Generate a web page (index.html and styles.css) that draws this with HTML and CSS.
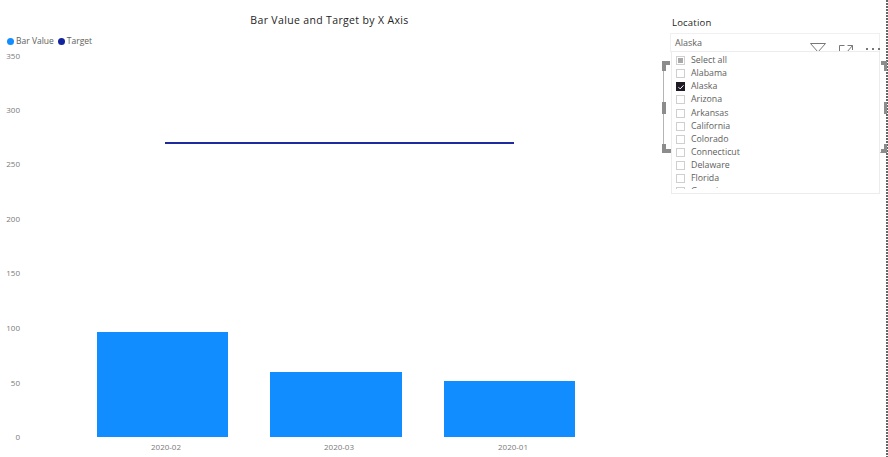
FILE: index.html
```html
<!DOCTYPE html>
<html lang="en">
<head>
    <meta charset="UTF-8">
    <meta name="viewport" content="width=device-width, initial-scale=1.0">
    <title>Bar Value and Target by X Axis</title>
    <link rel="stylesheet" href="styles.css">
</head>
<body>
    <div class="report">
        <section class="chart">
            <h1 class="chart-title">Bar Value and Target by X Axis</h1>
            <div class="legend">
                <span class="legend-item"><i class="dot dot-bar"></i>Bar Value</span>
                <span class="legend-item"><i class="dot dot-target"></i>Target</span>
            </div>
            <svg class="plot" width="660" height="407" viewBox="0 0 660 407">
                <g class="axis-y">
                    <text x="20" y="12">350</text>
                    <text x="20" y="66">300</text>
                    <text x="20" y="120">250</text>
                    <text x="20" y="175">200</text>
                    <text x="20" y="229">150</text>
                    <text x="20" y="284">100</text>
                    <text x="20" y="339">50</text>
                    <text x="20" y="393">0</text>
                </g>
                <rect class="bar" x="97" y="285" width="131" height="105"/>
                <rect class="bar" x="270" y="325" width="132" height="65"/>
                <rect class="bar" x="444" y="334" width="131" height="56"/>
                <line class="target" x1="165" y1="96" x2="514" y2="96"/>
                <g class="axis-x">
                    <text x="166" y="403">2020-02</text>
                    <text x="339" y="403">2020-03</text>
                    <text x="513" y="403">2020-01</text>
                </g>
            </svg>
        </section>

        <section class="slicer">
            <div class="slicer-title">Location</div>
            <div class="slicer-head">
                <span>Alaska</span>
                <div class="visual-icons">
                    <svg width="16" height="9" viewBox="0 0 16 9"><path d="M.5.5h15L8 9z"/></svg>
                    <svg width="14" height="7" viewBox="0 0 14 7"><path d="M.5 7V.5h5M8.5.5h5V5M13.5.5L8 7"/></svg>
                    <div class="more"><i></i><i></i><i></i></div>
                </div>
            </div>
            <div class="frame">
                <b class="handle h-tl"></b><b class="handle h-ml"></b><b class="handle h-bl"></b>
                <b class="handle h-tr"></b><b class="handle h-mr"></b><b class="handle h-br"></b>
            </div>
            <div class="dropdown">
                <ul class="dropdown-list">
                    <li><i class="box box-partial"></i>Select all</li>
                    <li><i class="box"></i>Alabama</li>
                    <li><i class="box box-on"><svg width="8" height="8" viewBox="0 0 8 8"><path d="M1.5 4.2l1.7 1.7 3.3-3.6"/></svg></i>Alaska</li>
                    <li><i class="box"></i>Arizona</li>
                    <li><i class="box"></i>Arkansas</li>
                    <li><i class="box"></i>California</li>
                    <li><i class="box"></i>Colorado</li>
                    <li><i class="box"></i>Connecticut</li>
                    <li><i class="box"></i>Delaware</li>
                    <li><i class="box"></i>Florida</li>
                    <li><i class="box"></i>Georgia</li>
                </ul>
            </div>
        </section>

        <div class="page-edge"></div>
    </div>
</body>
</html>
```

FILE: styles.css
```css
* {
    margin: 0;
    padding: 0;
    box-sizing: border-box;
}

html, body {
    height: 100%;
    overflow: hidden;
}

body {
    background: #fff;
    font-family: 'Open Sans', 'Noto Sans', sans-serif;
    color: #444;
}

.report {
    display: flex;
    height: 457px;
}

.chart {
    width: 660px;
    flex: none;
}

.chart-title {
    margin-top: 13px;
    margin-left: -1px;
    font-size: 10.5px;
    line-height: 14px;
    font-weight: 400;
    text-align: center;
    letter-spacing: 0.35px;
    color: #252423;
}

.legend {
    display: flex;
    gap: 4px;
    margin-top: 8px;
    padding-left: 7px;
    font-size: 8.5px;
    line-height: 12px;
    color: #605e5c;
}

.legend-item {
    display: flex;
    align-items: center;
    gap: 2px;
}

.dot {
    width: 7px;
    height: 7px;
    border-radius: 50%;
}

.dot-bar { background: #118dff; }
.dot-target { background: #12239e; }

.plot {
    display: block;
}

.plot text {
    font-size: 8px;
    fill: #7a7a7a;
}

.axis-y text { text-anchor: end; }
.axis-x text { text-anchor: middle; }

.bar { fill: #118dff; }

.target {
    stroke: #1f2a9c;
    stroke-width: 2;
}

.slicer {
    position: relative;
    width: 226px;
    flex: none;
    padding: 16px 0 0 10px;
}

.slicer-title {
    padding-left: 2px;
    font-size: 9.5px;
    line-height: 13px;
    letter-spacing: 0.2px;
    color: #252423;
}

.slicer-head {
    display: flex;
    justify-content: space-between;
    width: 210px;
    height: 19px;
    margin-top: 4px;
    padding: 3px 0 0 4px;
    border: 1px solid #f0f0f0;
    font-size: 9px;
    line-height: 12px;
    color: #605e5c;
}

.visual-icons {
    display: flex;
    align-items: flex-start;
    gap: 13px;
    margin-right: -1px;
    padding-top: 6px;
}

.visual-icons svg {
    fill: none;
    stroke: #777;
    stroke-width: 1;
}

.visual-icons svg + svg { margin-top: 2px; }

.more {
    display: flex;
    gap: 4px;
    margin-top: 5px;
}

.more i {
    width: 2px;
    height: 2px;
    background: #777;
}

/* selection frame sits behind the open dropdown */
.frame {
    position: absolute;
    left: 3px;
    top: 61px;
    width: 224px;
    height: 92px;
    border-left: 1px solid #b4b4b4;
    border-bottom: 1px solid #b4b4b4;
}

.handle {
    position: absolute;
    border: 0 solid #8c8c8c;
}

.h-tl { left: -2px; top: 0; width: 8px; height: 10px; border-width: 4px 0 0 4px; }
.h-ml { left: -2px; top: 41px; width: 4px; height: 12px; border-left-width: 4px; }
.h-bl { left: -2px; bottom: -1px; width: 9px; height: 9px; border-width: 0 0 4px 4px; }
.h-tr { right: 0; top: 0; width: 6px; height: 10px; border-width: 4px 3px 0 0; }
.h-mr { right: 0; top: 41px; width: 3px; height: 12px; border-right-width: 3px; }
.h-br { right: 0; bottom: -1px; width: 6px; height: 9px; border-width: 0 3px 4px 0; }

.dropdown {
    position: absolute;
    left: 11px;
    top: 51px;
    width: 209px;
    height: 143px;
    padding: 2px 0 0 4px;
    background: #fff;
    border: 1px solid #ececec;
}

.dropdown-list {
    height: 135px;
    overflow: hidden;
    list-style: none;
    font-size: 8.8px;
    color: #605e5c;
}

.dropdown-list li {
    display: flex;
    align-items: center;
    gap: 6px;
    height: 13.15px;
    line-height: 13px;
}

.box {
    display: flex;
    align-items: center;
    justify-content: center;
    width: 9px;
    height: 9px;
    flex: none;
    border: 1px solid #cfcfcf;
}

.box-partial {
    border-color: #d0d0d0;
    background: linear-gradient(#a9a9a9, #a9a9a9) center / 5px 5px no-repeat;
}

.box-on {
    border-color: #1f1a24;
    background: #1f1a24;
}

.box-on svg {
    flex: none;
    fill: none;
    stroke: #fff;
    stroke-width: 1;
}

.page-edge {
    width: 2px;
    flex: none;
    background: repeating-linear-gradient(to bottom, #666 0 2px, transparent 2px 3px);
}
```
